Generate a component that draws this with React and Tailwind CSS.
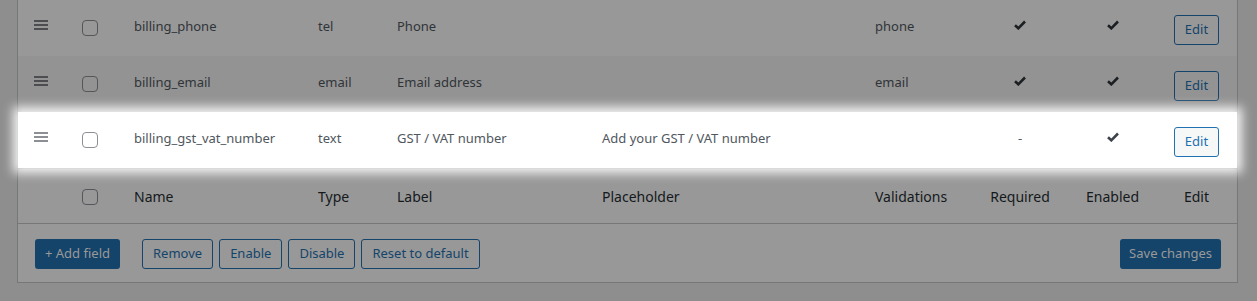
import React from 'react'

const rows = [
  { name: 'billing_phone', type: 'tel', label: 'Phone', placeholder: '', validation: 'phone', required: true, enabled: true, bg: 'bg-[#989898]' },
  { name: 'billing_email', type: 'email', label: 'Email address', placeholder: '', validation: 'email', required: true, enabled: true, bg: 'bg-[#939393]' },
]

function Bars({ color }) {
  return (
    <svg width="14" height="10" viewBox="0 0 14 10" className="block">
      <rect x="0" y="0" width="14" height="2" fill={color} />
      <rect x="0" y="4" width="14" height="2" fill={color} />
      <rect x="0" y="8" width="14" height="2" fill={color} />
    </svg>
  )
}

function Check({ color }) {
  return (
    <svg width="12" height="10" viewBox="0 0 12 10" className="block">
      <path d="M1 5.2 L4.3 8.3 L11 1.5" fill="none" stroke={color} strokeWidth="2.6" />
    </svg>
  )
}

function Box({ border }) {
  return <span className={`block w-4 h-4 rounded-[4px] border ${border}`} />
}

function Row({ r, lit }) {
  const text = lit ? 'text-[#50575e]' : 'text-[#303438]'
  const check = lit ? '#3c434a' : '#1b1f22'
  return (
    <div
      className={`flex items-center h-14 text-[13px] ${text} ${
        lit
          ? 'bg-white relative z-10 shadow-[0_0_10px_5px_rgba(255,255,255,0.9)]'
          : r.bg
      }`}
    >
      <div className="w-[52px] pl-4 -mt-1.5">
        <Bars color={lit ? '#8c8f94' : '#4b4d50'} />
      </div>
      <div className="w-[52px] pl-3">
        <Box border={lit ? 'border-[#8c8f94] bg-white' : 'border-[#545659]'} />
      </div>
      <div className="w-[184px] pl-3 -mt-0.5">{r.name}</div>
      <div className="w-[79px] pl-3 -mt-0.5">{r.type}</div>
      <div className="w-[205px] pl-3 -mt-0.5">{r.label}</div>
      <div className="w-[273px] pl-3 -mt-0.5">{r.placeholder}</div>
      <div className="w-[112px] pl-3 -mt-0.5">{r.validation}</div>
      <div className="w-[90px] flex justify-center -mt-1.5">
        {r.required ? <Check color={check} /> : <span className="mt-1">-</span>}
      </div>
      <div className="w-[95px] flex justify-center -mt-1.5">
        {r.enabled ? <Check color={check} /> : '-'}
      </div>
      <div className="flex-1 flex justify-center pt-1 pr-1">
        <button
          className={`h-[30px] px-[10px] rounded-[3px] border text-[13px] ${
            lit
              ? 'border-[#2271b1] text-[#2271b1] bg-[#f6f7f7]'
              : 'border-[#14446a] text-[#14446a] bg-transparent'
          }`}
        >
          Edit
        </button>
      </div>
    </div>
  )
}

function Btn({ children }) {
  return (
    <button className="h-[30px] px-[10px] rounded-[3px] border border-[#14446a] text-[#14446a] text-[13px]">
      {children}
    </button>
  )
}

export default function App() {
  return (
    <div
      className="w-[1257px] h-[301px] bg-[#8e8e8e] overflow-hidden"
      style={{ fontFamily: '"Noto Sans", "Open Sans", sans-serif' }}
    >
      <div className="ml-[17px] w-[1221px] border-l border-r border-b border-[#767778] bg-[#989898]">
        {rows.map(r => (
          <Row key={r.name} r={r} />
        ))}
        <Row
          lit
          r={{
            name: 'billing_gst_vat_number',
            type: 'text',
            label: 'GST / VAT number',
            placeholder: 'Add your GST / VAT number',
            validation: '',
            required: false,
            enabled: true,
          }}
        />
        <div className="flex items-center h-[56px] border-t border-b border-[#767778] bg-[#989898] text-[14px] text-[#15191c]">
          <div className="w-[52px]" />
          <div className="w-[52px] pl-3 pt-0.5">
            <Box border="border-[#545659]" />
          </div>
          <div className="w-[184px] pl-3">Name</div>
          <div className="w-[79px] pl-3">Type</div>
          <div className="w-[205px] pl-3">Label</div>
          <div className="w-[273px] pl-3">Placeholder</div>
          <div className="w-[112px] pl-3">Validations</div>
          <div className="w-[90px] text-center">Required</div>
          <div className="w-[95px] text-center">Enabled</div>
          <div className="flex-1 text-center pr-1">Edit</div>
        </div>
        <div className="flex items-center h-[58px] pl-[17px] pr-4 pt-0.5">
          <button className="h-[30px] px-[10px] rounded-[3px] bg-[#14446a] text-[#999999] text-[13px]">
            + Add field
          </button>
          <div className="flex gap-[6px] ml-[22px]">
            <Btn>Remove</Btn>
            <Btn>Enable</Btn>
            <Btn>Disable</Btn>
            <Btn>Reset to default</Btn>
          </div>
          <button className="ml-auto h-[30px] px-[9px] rounded-[3px] bg-[#14446a] text-[#999999] text-[13px]">
            Save changes
          </button>
        </div>
      </div>
    </div>
  )
}
